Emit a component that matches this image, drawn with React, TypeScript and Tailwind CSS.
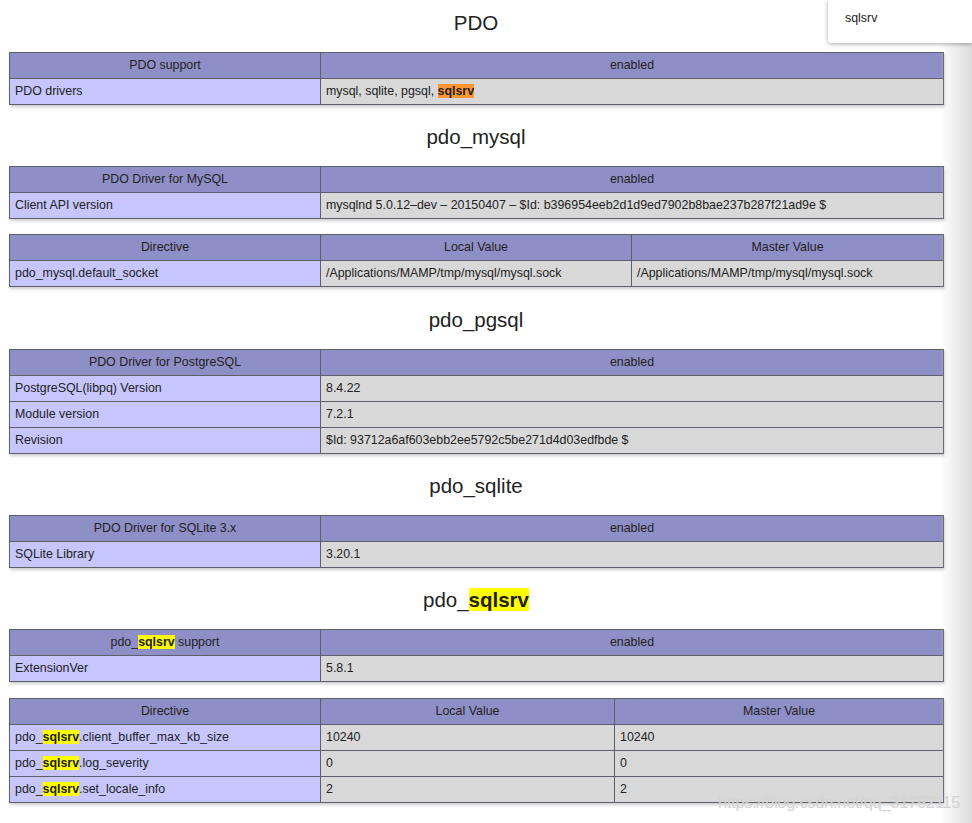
import React from 'react'

type Cell = React.ReactNode

const Hl = ({ orange }: { orange?: boolean }) => (
  <span className={orange ? 'bg-[#ff9632] font-bold' : 'bg-[#ffff00] font-bold'}>sqlsrv</span>
)

function InfoTable({ cols, head, rows }: { cols: number[]; head: Cell[]; rows: Cell[][] }) {
  return (
    <table className="table-fixed border-collapse w-[934px] text-[12.4px] leading-[17px] text-[#222] shadow-[1px_2px_3px_#ccc]">
      <colgroup>
        {cols.map((w, i) => (
          <col key={i} style={{ width: w }} />
        ))}
      </colgroup>
      <tbody>
        <tr className="bg-[#8f8fc7]">
          {head.map((h, i) => (
            <th key={i} className="border border-[#5f5f6a] px-[5px] py-[4px] font-normal text-center">
              {h}
            </th>
          ))}
        </tr>
        {rows.map((r, ri) => (
          <tr key={ri}>
            {r.map((c, ci) => (
              <td
                key={ci}
                className={`border border-[#5f5f6a] px-[5px] py-[4px] text-left ${ci === 0 ? 'bg-[#c6c6fc]' : 'bg-[#d8d8d8]'}`}
              >
                {c}
              </td>
            ))}
          </tr>
        ))}
      </tbody>
    </table>
  )
}

const H2 = ({ children, top = 'mt-[20px]' }: { children: React.ReactNode; top?: string }) => (
  <h2 className={`${top} mb-[17px] text-center text-[20.5px] leading-[24px] text-[#222]`}>{children}</h2>
)

export default function App() {
  return (
    <div className="relative w-[972px] h-[823px] overflow-hidden bg-white" style={{ fontFamily: '"Liberation Sans", Arial, sans-serif' }}>
      <div className="w-[952px] px-[9px]">
        <H2 top="mt-[11px]">PDO</H2>
        <InfoTable
          cols={[311, 623]}
          head={['PDO support', 'enabled']}
          rows={[['PDO drivers', <>mysql, sqlite, pgsql, <Hl orange /></>]]}
        />

        <H2>pdo_mysql</H2>
        <InfoTable
          cols={[311, 623]}
          head={['PDO Driver for MySQL', 'enabled']}
          rows={[['Client API version', 'mysqlnd 5.0.12–dev – 20150407 – $Id: b396954eeb2d1d9ed7902b8bae237b287f21ad9e $']]}
        />
        <div className="h-[15px]" />
        <InfoTable
          cols={[311, 311, 312]}
          head={['Directive', 'Local Value', 'Master Value']}
          rows={[['pdo_mysql.default_socket', '/Applications/MAMP/tmp/mysql/mysql.sock', '/Applications/MAMP/tmp/mysql/mysql.sock']]}
        />

        <H2 top="mt-[21px]">pdo_pgsql</H2>
        <InfoTable
          cols={[311, 623]}
          head={['PDO Driver for PostgreSQL', 'enabled']}
          rows={[
            ['PostgreSQL(libpq) Version', '8.4.22'],
            ['Module version', '7.2.1'],
            ['Revision', '$Id: 93712a6af603ebb2ee5792c5be271d4d03edfbde $'],
          ]}
        />

        <H2>pdo_sqlite</H2>
        <InfoTable
          cols={[311, 623]}
          head={['PDO Driver for SQLite 3.x', 'enabled']}
          rows={[['SQLite Library', '3.20.1']]}
        />

        <H2>
          pdo_<Hl />
        </H2>
        <InfoTable
          cols={[311, 623]}
          head={[<>pdo_<Hl /> support</>, 'enabled']}
          rows={[['ExtensionVer', '5.8.1']]}
        />
        <div className="h-[16px]" />
        <InfoTable
          cols={[311, 294, 329]}
          head={['Directive', 'Local Value', 'Master Value']}
          rows={[
            [<>pdo_<Hl />.client_buffer_max_kb_size</>, '10240', '10240'],
            [<>pdo_<Hl />.log_severity</>, '0', '0'],
            [<>pdo_<Hl />.set_locale_info</>, '2', '2'],
          ]}
        />
      </div>

      {/* right edge shadow */}
      <div className="absolute right-0 top-[43px] bottom-0 w-[32px] bg-gradient-to-r from-white/0 to-[#dcdcdc]" />

      {/* find bar */}
      <div className="absolute right-0 top-0 w-[144px] h-[43px] bg-white rounded-bl-[3px] shadow-[0_1px_4px_rgba(0,0,0,0.35)] pl-[17px] pt-[10px] text-[12.4px] leading-[17px] text-[#222]">
        sqlsrv
      </div>

      {/* watermark */}
      <div className="absolute left-[718px] top-[792px] text-[16.5px] leading-[20px] tracking-[-0.3px] text-[#d4d4d4]">
        https://blog.csdn.net/qq_31752115
      </div>
    </div>
  )
}
